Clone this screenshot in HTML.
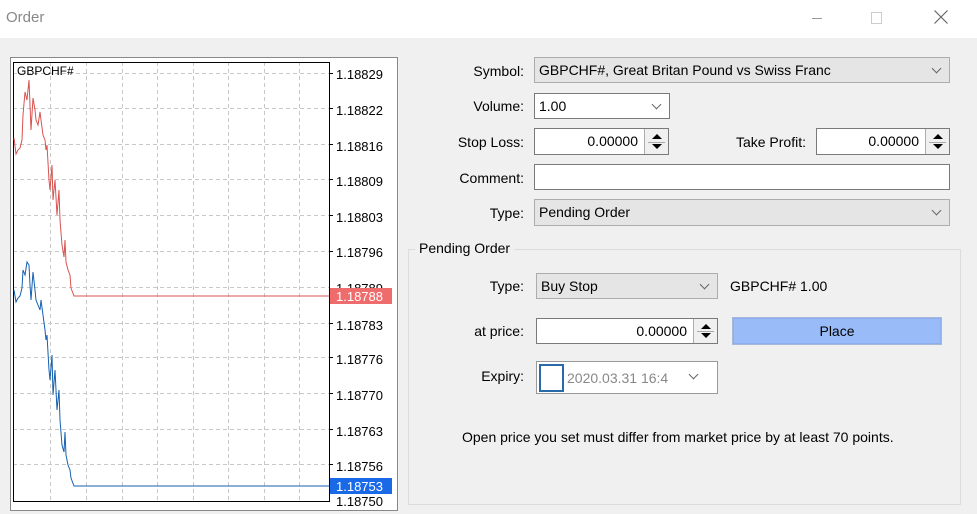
<!DOCTYPE html>
<html><head><style>
*{margin:0;padding:0;box-sizing:border-box}
body{width:977px;height:514px;background:#f0f0f0;font-family:"Liberation Sans",sans-serif;font-size:14px;color:#000;position:relative;overflow:hidden}
.a{position:absolute}
.tb{left:0;top:0;width:977px;height:38px;background:#fff}
.lbl{text-align:right;width:120px;font-size:14px}
.sel{background:#e5e5e5;border:1px solid #adadad}
.inp{background:#fff;border:1px solid #7a7a7a}
.chev{position:absolute;right:9px;top:7px;width:7px;height:7px;border-right:1px solid #666;border-bottom:1px solid #666;transform:rotate(45deg)}
.spin{position:absolute;top:0;right:0;width:24px;height:100%;background:#f0f0f0;border-left:1px solid #adadad}
.spin:before{content:"";position:absolute;left:7px;top:5px;border:5px solid transparent;border-bottom:5px solid #000;border-top:0}
.spin:after{content:"";position:absolute;left:7px;bottom:5px;border:5px solid transparent;border-top:5px solid #000;border-bottom:0}
.spin i{position:absolute;left:3px;right:3px;top:50%;border-top:1px solid #aaa}
.txt{position:absolute;top:4px;left:4px}
.num{position:absolute;top:4px;right:30px}
</style></head><body>
<div class="a tb"></div>
<div class="a" style="left:6px;top:9px;font-size:15px;color:#888">Order</div>
<div class="a" style="left:812px;top:18px;width:10px;border-top:1px solid #999"></div>
<div class="a" style="left:871px;top:12px;width:11px;height:12px;border:1px solid #ccc"></div>
<svg class="a" style="left:934px;top:10px" width="14" height="14"><path d="M0.5 0.5L13.5 13.5M13.5 0.5L0.5 13.5" stroke="#666" stroke-width="1.2"/></svg>

<div class="a" style="left:10px;top:57px;width:388px;height:454px;border:1px solid #888;background:#fff"></div>
<svg class="a" style="left:0;top:0" width="400" height="514">
<g stroke="#c8c8c8" stroke-dasharray="4,3" stroke-width="1">
<line x1="50.5" y1="62" x2="50.5" y2="501"/><line x1="86.5" y1="62" x2="86.5" y2="501"/><line x1="122.5" y1="62" x2="122.5" y2="501"/><line x1="157.5" y1="62" x2="157.5" y2="501"/><line x1="193.5" y1="62" x2="193.5" y2="501"/><line x1="228.5" y1="62" x2="228.5" y2="501"/><line x1="264.5" y1="62" x2="264.5" y2="501"/><line x1="299.5" y1="62" x2="299.5" y2="501"/>
<line x1="13" y1="73.5" x2="329" y2="73.5"/><line x1="13" y1="108.5" x2="329" y2="108.5"/><line x1="13" y1="144.5" x2="329" y2="144.5"/><line x1="13" y1="179.5" x2="329" y2="179.5"/><line x1="13" y1="215.5" x2="329" y2="215.5"/><line x1="13" y1="251.5" x2="329" y2="251.5"/><line x1="13" y1="287.5" x2="329" y2="287.5"/><line x1="13" y1="323.5" x2="329" y2="323.5"/><line x1="13" y1="357.5" x2="329" y2="357.5"/><line x1="13" y1="393.5" x2="329" y2="393.5"/><line x1="13" y1="429.5" x2="329" y2="429.5"/><line x1="13" y1="464.5" x2="329" y2="464.5"/>
</g>
<rect x="13.5" y="62.5" width="316" height="439" fill="none" stroke="#000"/>
<g stroke="#000"><line x1="329" y1="73.5" x2="333" y2="73.5"/><line x1="329" y1="108.5" x2="333" y2="108.5"/><line x1="329" y1="144.5" x2="333" y2="144.5"/><line x1="329" y1="179.5" x2="333" y2="179.5"/><line x1="329" y1="215.5" x2="333" y2="215.5"/><line x1="329" y1="251.5" x2="333" y2="251.5"/><line x1="329" y1="323.5" x2="333" y2="323.5"/><line x1="329" y1="357.5" x2="333" y2="357.5"/><line x1="329" y1="393.5" x2="333" y2="393.5"/><line x1="329" y1="429.5" x2="333" y2="429.5"/><line x1="329" y1="464.5" x2="333" y2="464.5"/></g>
<polyline fill="none" stroke="#d9534f" stroke-width="1" points="14,138 16,154 18,150 20,148 22,140 23,115 25,92 27,100 29,80 30,105 31,130 33,98 35,110 36,120 38,125 40,112 41,120 43,135 45,140 46,150 47,145 49,180 50,190 52,165 53,200 55,180 57,215 59,190 60,220 62,245 64,257 65,240 66,262 68,270 70,275 71,288 74,296 329,296"/>
<polyline fill="none" stroke="#1560b0" stroke-width="1" points="14,290 16,302 18,298 20,296 22,288 23,270 25,275 27,262 29,265 30,285 31,300 33,272 35,290 36,300 38,305 40,310 41,300 43,315 45,330 46,340 47,335 49,370 50,380 52,355 53,395 55,370 57,410 59,390 60,420 62,445 64,452 65,432 66,455 68,465 70,470 71,478 74,486 329,486"/>
<text x="17" y="75" font-family="Liberation Sans" font-size="12">GBPCHF#</text>
<g font-family="Liberation Sans" font-size="13" fill="#000">
<text x="336" y="79">1.18829</text><text x="336" y="115">1.18822</text><text x="336" y="151">1.18816</text><text x="336" y="186">1.18809</text><text x="336" y="222">1.18803</text><text x="336" y="257">1.18796</text><text x="336" y="293">1.18789</text><text x="336" y="330">1.18783</text><text x="336" y="364">1.18776</text><text x="336" y="400">1.18770</text><text x="336" y="436">1.18763</text><text x="336" y="471">1.18756</text><text x="336" y="506">1.18750</text>
</g>
<rect x="330" y="288" width="62" height="16" fill="#ee6c6c"/><text x="336" y="301" font-family="Liberation Sans" font-size="13" fill="#fff">1.18788</text>
<rect x="330" y="478" width="62" height="16" fill="#1a6ae8"/><text x="336" y="491" font-family="Liberation Sans" font-size="13" fill="#fff">1.18753</text>
</svg>

<div class="a lbl" style="left:404px;top:63px">Symbol:</div>
<div class="a sel" style="left:534px;top:57px;width:416px;height:26px"><span class="txt">GBPCHF#, Great Britan Pound vs Swiss Franc</span><i class="chev"></i></div>
<div class="a lbl" style="left:404px;top:98px">Volume:</div>
<div class="a inp" style="left:534px;top:93px;width:136px;height:26px"><span class="txt">1.00</span><i class="chev"></i></div>
<div class="a lbl" style="left:404px;top:134px">Stop Loss:</div>
<div class="a inp" style="left:534px;top:128px;width:135px;height:27px"><span class="num">0.00000</span><div class="spin"><i></i></div></div>
<div class="a lbl" style="left:686px;top:134px">Take Profit:</div>
<div class="a inp" style="left:816px;top:128px;width:134px;height:27px"><span class="num">0.00000</span><div class="spin"><i></i></div></div>
<div class="a lbl" style="left:404px;top:170px">Comment:</div>
<div class="a inp" style="left:534px;top:164px;width:416px;height:26px"></div>
<div class="a lbl" style="left:404px;top:205px">Type:</div>
<div class="a sel" style="left:534px;top:199px;width:416px;height:27px"><span class="txt">Pending Order</span><i class="chev"></i></div>

<div class="a" style="left:408px;top:249px;width:553px;height:256px;border:1px solid #dcdcdc"></div>
<div class="a" style="left:415px;top:240px;padding:0 4px;background:#f0f0f0">Pending Order</div>
<div class="a lbl" style="left:404px;top:278px">Type:</div>
<div class="a sel" style="left:536px;top:273px;width:182px;height:26px"><span class="txt">Buy Stop</span><i class="chev"></i></div>
<div class="a" style="left:730px;top:278px">GBPCHF# 1.00</div>
<div class="a lbl" style="left:404px;top:323px">at price:</div>
<div class="a inp" style="left:536px;top:318px;width:182px;height:26px"><span class="num">0.00000</span><div class="spin"><i></i></div></div>
<div class="a" style="left:732px;top:317px;width:210px;height:28px;background:#99bbf8;border:1px solid #a8b8d8;box-shadow:inset 0 0 0 1px #8aaef0;text-align:center;line-height:26px">Place</div>
<div class="a lbl" style="left:404px;top:368px">Expiry:</div>
<div class="a inp" style="left:536px;top:361px;width:182px;height:33px;border-color:#999"><div class="a" style="left:2px;top:2px;width:25px;height:28px;border:2px solid #2b6aa8"></div><span class="a" style="left:30px;top:8px;color:#888">2020.03.31 16:4</span><i class="chev" style="right:20px;top:9px"></i></div>
<div class="a" style="left:462px;top:429px">Open price you set must differ from market price by at least 70 points.</div>
</body></html>
